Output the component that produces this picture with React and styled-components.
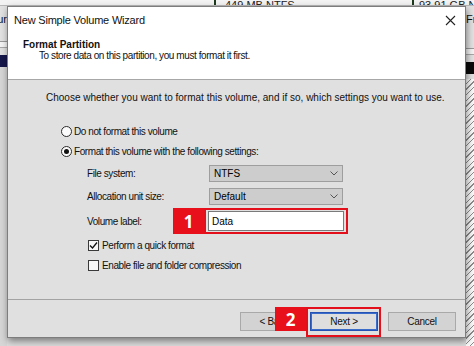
import React from "react";
import styled, { createGlobalStyle } from "styled-components";

const GlobalStyle = createGlobalStyle`
  html, body { margin: 0; padding: 0; }
  body {
    width: 474px;
    height: 346px;
    overflow: hidden;
    background: #e6e6e6;
    font-family: "Liberation Sans", Arial, sans-serif;
    color: #111;
  }
`;

const Desktop = styled.div`
  width: 474px;
  height: 346px;
  display: grid;
  grid-template-columns: 7px 459px 8px;
  grid-template-rows: 6px 332px 8px;
  background: #dcdcdc;
  overflow: hidden;
`;

/* ---------- backdrop (disk management window behind) ---------- */
const TopStrip = styled.div`
  grid-column: 1 / 4;
  grid-row: 1;
  display: flex;
  background: #f3f3f3;
  border-bottom: 1px solid #b9b9b9;
  box-sizing: border-box;
  overflow: hidden;
`;

const StripCell = styled.div`
  width: ${(p) => p.$w}px;
  flex: none;
  box-sizing: border-box;
  border-left: ${(p) => (p.$bar ? "2px solid #1d3a1d" : "none")};
  padding-left: ${(p) => p.$pad || 0}px;
  font-size: 11px;
  line-height: 11px;
  color: #222;
  white-space: nowrap;
  overflow: hidden;
`;

const StripText = styled.span`
  display: block;
  font-weight: ${(p) => (p.$bold ? 700 : 400)};
`;

const SideStrip = styled.div`
  grid-row: 2 / 4;
  grid-column: ${(p) => p.$col};
  display: flex;
  flex-direction: column;
  background: #e2e2e2;
  overflow: hidden;
`;

const SideText = styled.div`
  height: 26px;
  padding-top: 7px;
  box-sizing: border-box;
  font-size: 11px;
  line-height: 12px;
  white-space: nowrap;
  color: #111;
  direction: ${(p) => (p.$rtl ? "rtl" : "ltr")};
  text-align: ${(p) => (p.$rtl ? "right" : "left")};
`;

const SideGap = styled.div`
  height: ${(p) => p.$h}px;
  flex: none;
  background: ${(p) => p.$bg || "transparent"};
`;

const SideLines = styled.div`
  height: 5px;
  flex: none;
  border-top: 1px solid #9a9a9a;
  border-bottom: 1px solid #a8a8a8;
  background: #f4f4f4;
`;

const Hatch = styled.div`
  flex: 1;
  margin-top: 5px;
  background: repeating-linear-gradient(
    135deg,
    #fafafa 0px,
    #fafafa 3px,
    #8c8c8c 3px,
    #8c8c8c 4px
  );
`;

/* ---------- dialog window ---------- */
const Window = styled.div`
  grid-column: 2;
  grid-row: 2;
  display: flex;
  flex-direction: column;
  background: #e0e0e0;
  border: 1px solid #7d7d7d;
  box-sizing: border-box;
  box-shadow: 1px 3px 7px rgba(0, 0, 0, 0.45);
  position: relative;
  z-index: 1;
`;

const TitleBar = styled.div`
  height: 26px;
  flex: none;
  display: flex;
  align-items: center;
  justify-content: space-between;
  padding: 0 8px 0 6px;
  background: #ffffff;
`;

const Title = styled.span`
  font-size: 11px;
  letter-spacing: -0.2px;
  color: #111;
`;

const CloseButton = styled.span`
  display: flex;
  align-items: center;
  width: 12px;
  height: 12px;
`;

const Header = styled.div`
  height: 47px;
  flex: none;
  box-sizing: border-box;
  background: #ffffff;
  border-bottom: 1px solid #a7a7a7;
  padding: 6px 0 0 15px;
`;

const HeaderTitle = styled.div`
  font-size: 10px;
  font-weight: 700;
  line-height: 12px;
  color: #111;
`;

const HeaderSub = styled.div`
  font-size: 10px;
  letter-spacing: -0.42px;
  line-height: 12px;
  margin-top: -1px;
  padding-left: 16px;
  color: #111;
`;

const Body = styled.div`
  flex: 1;
  display: flex;
  flex-direction: column;
  padding: 11px 0 0 38px;
`;

const Intro = styled.div`
  font-size: 10px;
  letter-spacing: 0px;
  line-height: 14px;
  white-space: nowrap;
`;

const OptionRow = styled.label`
  display: flex;
  align-items: center;
  height: 16px;
  margin-top: ${(p) => p.$mt}px;
  margin-left: ${(p) => p.$ml}px;
  font-size: 10px;
  letter-spacing: -0.42px;
  white-space: nowrap;
`;

const Radio = styled.span`
  width: 11px;
  height: 11px;
  box-sizing: border-box;
  border-radius: 50%;
  border: 1px solid #2a2a2a;
  background: #fbfbfb;
  margin-right: 2px;
  display: flex;
  align-items: center;
  justify-content: center;
  &::after {
    content: "";
    display: ${(p) => (p.$on ? "block" : "none")};
    width: 5px;
    height: 5px;
    border-radius: 50%;
    background: #111;
  }
`;

const Checkbox = styled.span`
  width: 11px;
  height: 11px;
  box-sizing: border-box;
  border: 1px solid #3a3a3a;
  background: #f7f7f7;
  margin-right: 3px;
  display: flex;
  align-items: center;
  justify-content: center;
`;

const Settings = styled.div`
  display: grid;
  grid-template-columns: 122px 134px;
  margin-left: 41px;
  margin-top: 5px;
`;

const Label = styled.div`
  display: flex;
  align-items: center;
  font-size: 10px;
  letter-spacing: -0.42px;
  margin-top: ${(p) => p.$mt || 0}px;
  height: ${(p) => p.$h}px;
`;

const Select = styled.div`
  height: 17px;
  margin-top: ${(p) => p.$mt || 0}px;
  box-sizing: border-box;
  display: flex;
  align-items: center;
  justify-content: space-between;
  padding: 0 4px 0 4px;
  background: #cdcdcd;
  border: 1px solid #9e9e9e;
  font-size: 10px;
  color: #000;
`;

const FieldWrap = styled.div`
  position: relative;
  margin-top: 3px;
  margin-left: -5px;
  width: 144px;
  height: 26px;
  box-sizing: border-box;
  border: 2px solid #e3101b;
  padding: 1px 2px;
`;

const TextInput = styled.div`
  height: 20px;
  box-sizing: border-box;
  border: 1px solid #7a7a7a;
  background: #ffffff;
  display: flex;
  align-items: center;
  padding-left: 3px;
  font-size: 10px;
  color: #000;
`;

const Badge = styled.div`
  position: absolute;
  top: ${(p) => p.$top}px;
  right: calc(100% + 2px);
  width: ${(p) => p.$w}px;
  height: ${(p) => p.$h}px;
  background: #e8101a;
  color: #fff;
  font-family: "Open Sans", "Liberation Sans", sans-serif;
  font-weight: 700;
  font-size: 17px;
  display: flex;
  align-items: center;
  justify-content: center;
`;

const Footer = styled.div`
  height: 38px;
  flex: none;
  box-sizing: border-box;
  border-top: 1px solid #a3a3a3;
  display: flex;
  justify-content: flex-end;
  align-items: flex-start;
  padding: 12px 9px 0 0;
`;

const ButtonGroup = styled.div`
  display: flex;
  gap: ${(p) => p.$gap}px;
  margin-left: ${(p) => p.$ml || 0}px;
`;

const Button = styled.div`
  position: relative;
  width: 68px;
  height: 19px;
  box-sizing: border-box;
  display: flex;
  align-items: center;
  justify-content: center;
  font-size: 10px;
  letter-spacing: -0.3px;
  color: #111;
  background: ${(p) => (p.$primary ? "#dedede" : "#d3d3d3")};
  border: 1px solid ${(p) => (p.$primary ? "#2453b5" : "#a9a9a9")};
  box-shadow: ${(p) => (p.$primary ? "inset 0 0 0 1px #3b6cc9" : "none")};
`;

const Highlight = styled.div`
  position: absolute;
  top: -6px;
  left: -5px;
  right: -4px;
  bottom: -7px;
  border: 2px solid #e3101b;
  pointer-events: none;
`;

const Spacer = styled.div`
  flex: 1;
`;

const Chevron = () => (
  <svg width="8" height="5" viewBox="0 0 8 5">
    <path d="M0.5 0.5 L4 4 L7.5 0.5" fill="none" stroke="#555" strokeWidth="1" />
  </svg>
);

const Check = () => (
  <svg width="9" height="9" viewBox="0 0 9 9">
    <path d="M1 4.5 L3.5 7 L8 1.5" fill="none" stroke="#111" strokeWidth="1.3" />
  </svg>
);

export default function App() {
  return (
    <>
      <GlobalStyle />
      <Desktop>
        <TopStrip>
          <StripCell $w={214} />
          <StripCell $w={198} $bar $pad={9}>
            <StripText>449 MB NTFS</StripText>
          </StripCell>
          <StripCell $w={62} $bar $pad={5}>
            <StripText>93.91 GB N</StripText>
          </StripCell>
        </TopStrip>

        <SideStrip $col={1}>
          <SideText $rtl>Volur</SideText>
          <SideGap $h={16} />
          <SideLines />
          <SideGap $h={7} />
          <SideGap $h={12} $bg="#15164a" />
          <SideGap $h={300} $bg="#d6d6d6" />
        </SideStrip>

        <Window>
          <TitleBar>
            <Title>New Simple Volume Wizard</Title>
            <CloseButton>
              <svg width="11" height="11" viewBox="0 0 11 11">
                <path d="M1 1 L10 10 M10 1 L1 10" stroke="#222" strokeWidth="1.1" />
              </svg>
            </CloseButton>
          </TitleBar>

          <Header>
            <HeaderTitle>Format Partition</HeaderTitle>
            <HeaderSub>To store data on this partition, you must format it first.</HeaderSub>
          </Header>

          <Body>
            <Intro>
              Choose whether you want to format this volume, and if so, which settings you want to use.
            </Intro>

            <OptionRow $mt={18} $ml={15}>
              <Radio />
              Do not format this volume
            </OptionRow>
            <OptionRow $mt={4} $ml={15}>
              <Radio $on />
              Format this volume with the following settings:
            </OptionRow>

            <Settings>
              <Label $h={17} $mt={1}>File system:</Label>
              <Select $mt={1}>
                NTFS
                <Chevron />
              </Select>

              <Label $h={17} $mt={6}>Allocation unit size:</Label>
              <Select $mt={6}>
                Default
                <Chevron />
              </Select>

              <Label $h={26} $mt={3}>Volume label:</Label>
              <FieldWrap>
                <Badge $top={-2} $w={31} $h={26}>1</Badge>
                <TextInput>Data</TextInput>
              </FieldWrap>
            </Settings>

            <OptionRow $mt={3} $ml={42}>
              <Checkbox>
                <Check />
              </Checkbox>
              Perform a quick format
            </OptionRow>
            <OptionRow $mt={4} $ml={42}>
              <Checkbox />
              Enable file and folder compression
            </OptionRow>
            <Spacer />
          </Body>

          <Footer>
            <ButtonGroup $gap={2}>
              <Button>&lt; Back</Button>
              <Button $primary>
                Next &gt;
                <Highlight>
                  <Badge $top={-2} $w={31} $h={24}>2</Badge>
                </Highlight>
              </Button>
            </ButtonGroup>
            <ButtonGroup $gap={0} $ml={10}>
              <Button>Cancel</Button>
            </ButtonGroup>
          </Footer>
        </Window>

        <SideStrip $col={3}>
          <SideText>Fr</SideText>
          <SideGap $h={16} />
          <SideLines />
          <SideGap $h={7} />
          <SideGap $h={12} $bg="#0a0a0a" />
          <Hatch />
        </SideStrip>
      </Desktop>
    </>
  );
}
